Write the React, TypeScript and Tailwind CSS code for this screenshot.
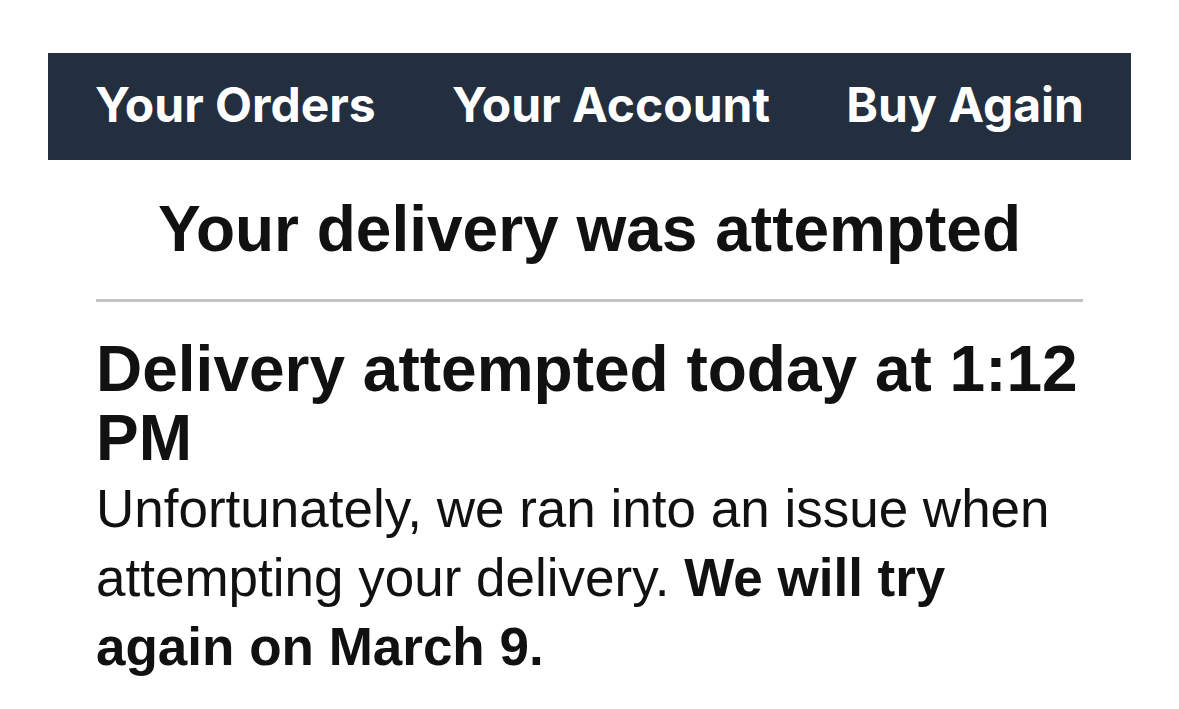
export default function App() {
  return (
    <div className="min-h-[709px] w-[1179px] bg-white pt-[53px] font-['Liberation_Sans',Arial,sans-serif] text-[#111]">
      <nav className="mx-[48px] flex h-[107px] items-center justify-between bg-[#232f3e] px-[47px] pb-[4px] font-['Inter',sans-serif] text-[48px] font-bold text-white">
        <span>Your Orders</span>
        <span>Your Account</span>
        <span>Buy Again</span>
      </nav>
      <div className="mx-[96px]">
        <h1 className="pt-[37px] pb-[38px] text-center text-[64px] font-bold leading-none">
          Your delivery was attempted
        </h1>
        <hr className="border-t-[3px] border-[#c2c2c2]" />
        <h2 className="mt-[33px] text-[64px] font-bold leading-[69px]">
          Delivery attempted today at 1:12 PM
        </h2>
        <p className="mt-[1px] text-[53px] leading-[69px]">
          Unfortunately, we ran into an issue when attempting your delivery.{' '}
          <b>We will try again on March 9.</b>
        </p>
      </div>
    </div>
  )
}
